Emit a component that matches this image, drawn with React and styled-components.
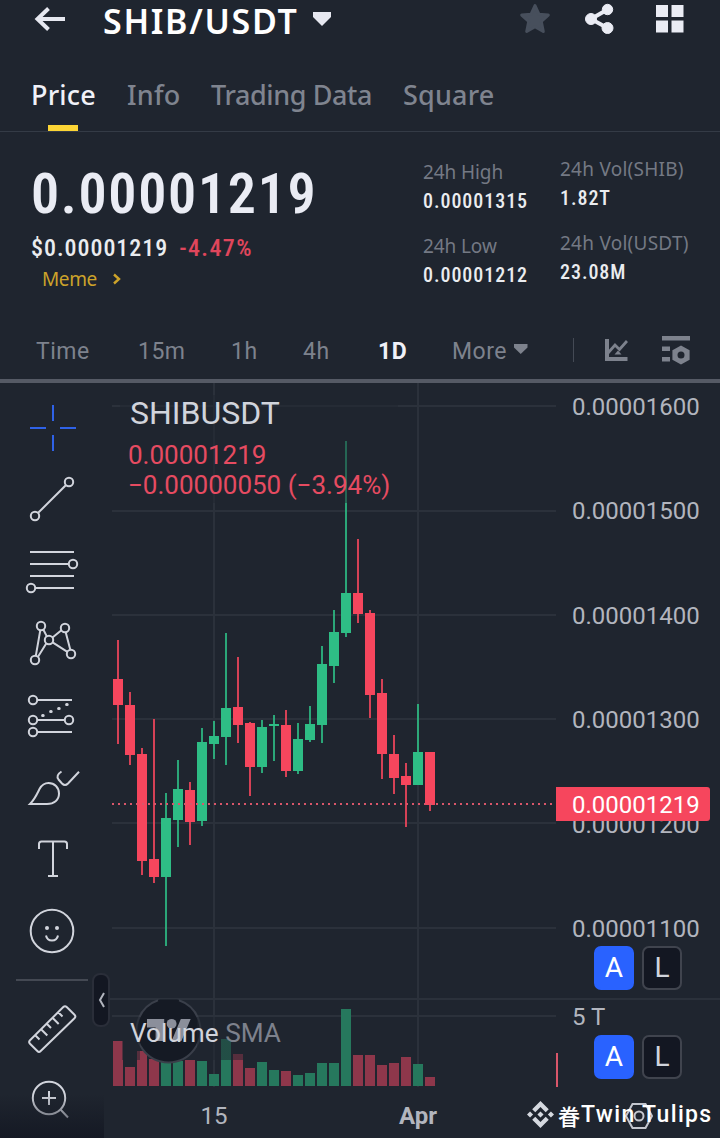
import React from 'react';
import styled, { createGlobalStyle } from 'styled-components';
import { SiBinance } from 'react-icons/si';

const GREEN = '#2ebd85';
const RED = '#f6465d';

const tabs = ['Price', 'Info', 'Trading Data', 'Square'];
const intervals = ['Time', '15m', '1h', '4h', '1D'];
const prices = ['0.00001600', '0.00001500', '0.00001400', '0.00001300', '0.00001200', '0.00001100'];

// up, high, body top, body bottom, low, volume top
const candles = [
    [0, 640, 679, 705, 744, 1041],
    [0, 692, 705, 755, 765, 1067],
    [0, 748, 754, 861, 875, 1051],
    [0, 719, 859, 877, 883, 1059],
    [1, 793, 818, 877, 946, 1062],
    [1, 760, 789, 820, 847, 1061],
    [0, 782, 790, 822, 845, 1060],
    [1, 728, 742, 821, 826, 1061],
    [1, 721, 736, 744, 759, 1074],
    [1, 633, 708, 737, 765, 1039],
    [0, 657, 707, 725, 743, 1054],
    [0, 722, 723, 767, 796, 1068],
    [1, 720, 727, 767, 773, 1062],
    [1, 715, 724, 726, 761, 1070],
    [0, 710, 725, 771, 777, 1071],
    [1, 723, 739, 771, 774, 1075],
    [1, 706, 724, 740, 742, 1073],
    [1, 646, 664, 725, 743, 1063],
    [1, 610, 632, 666, 683, 1063],
    [1, 441, 593, 633, 637, 1009],
    [0, 539, 593, 614, 623, 1055],
    [0, 610, 613, 695, 718, 1055],
    [0, 679, 693, 754, 779, 1065],
    [0, 735, 754, 778, 794, 1063],
    [0, 763, 776, 785, 827, 1057],
    [1, 704, 752, 785, 785, 1064],
    [0, 752, 752, 805, 811, 1077],
];

const tools = [
    <path key="cross" stroke="#2f62e8" d="M53 13v16M53 43v16M30 36h16M60 36h16" />,
    <g key="line">
        <path d="M38.2 48.8 65.8 21.2" />
        <circle cx="69" cy="18" r="4.2" />
        <circle cx="35" cy="52" r="4.2" />
    </g>,
    <g key="fib">
        <path d="M30 16h44M30 28h39M30 40h44M35 52h39" />
        <circle cx="73" cy="28" r="4.2" />
        <circle cx="31" cy="52" r="4.2" />
    </g>,
    <g key="pattern">
        <path d="M35.8 47.8 40.3 22.2M43.3 21.5 46.8 28.4M38 48.8 46.4 35.3M52.5 29.6 61.4 22.3M52.6 34.3 67.4 43.9M65.7 24.2 70.3 41.8" />
        <circle cx="41" cy="18" r="4.2" />
        <circle cx="65" cy="20" r="4.2" />
        <circle cx="49" cy="32" r="4.2" />
        <circle cx="71" cy="46" r="4.2" />
        <circle cx="35" cy="52" r="4.2" />
    </g>,
    <g key="forecast">
        <path d="M37 20h35M37 40h28M37 52h35" />
        <circle cx="33" cy="20" r="4.2" />
        <circle cx="33" cy="40" r="4.2" />
        <circle cx="69" cy="40" r="4.2" />
        <circle cx="33" cy="52" r="4.2" />
        <path strokeWidth="3" strokeLinecap="round" d="M42.6 35.6h.6M50.6 31.6h.6M58.6 28.4h.6M66.6 24.6h.6" />
    </g>,
    <g key="brush">
        <path d="M30 52C35 47 37.5 41 39.5 37 42 32.500 45 31 48.500 31 54.500 31 59 35.500 59 41.500 59 48 54 52 47 52Z" />
        <path d="M61.500 19.500C57.500 22 56.500 25 58.500 27.500L62 31.500Q65 34.500 68 31.500L79 19.800" />
    </g>,
    <path key="text" d="M39 25v-5q0-2.500 2.500-2.500h23q2.500 0 2.500 2.500v5M53 18v34M48 52h10" />,
    <g key="emoji">
        <circle cx="52" cy="35" r="21.300" />
        <circle cx="47" cy="32" r="2" fill="#d1d4dc" stroke="none" />
        <circle cx="57" cy="32" r="2" fill="#d1d4dc" stroke="none" />
        <path d="M46 39.500q1 5 6 5t6-5" />
    </g>,
];

const bottomTools = [
    <path
        key="ruler"
        strokeLinejoin="round"
        d="M63.300 15 30 48.300Q28.300 50 30 51.700L37.300 59Q39 60.700 40.700 59L74.500 26.200Q76.200 24.500 74.500 22.700L66.700 15Q65 13.300 63.300 15ZM35.500 43.500l4 4M41.300 37.500l6 6M47 32l4 4M52.700 26l6 6M58.500 20.500l4 4"
    />,
    <g key="zoom">
        <circle cx="49" cy="34" r="16.200" />
        <path d="M42 34h14M49 27v14M60.500 45.500l7.500 8" />
    </g>,
];

function ToolIcon({ children }) {
    return (
        <svg width="104" height="72" fill="none" stroke="#d1d4dc" strokeWidth="2">
            {children}
        </svg>
    );
}

function TopBar() {
    return (
        <TopBarRow>
            <svg width="32" height="24" fill="none" stroke="#e6e8f0" strokeWidth="4">
                <path d="M14.500 1.500 3.500 12l11 10.500M4 12h27" />
            </svg>
            <Title>SHIB/USDT</Title>
            <svg width="18" height="14" fill="#e6e8f0">
                <path d="M0 0h18v5l-9 9-9-9z" />
            </svg>
            <TopActions>
                <svg width="32" height="32" viewBox="-16 -16 32 32" fill="#474f5c" stroke="#474f5c" strokeWidth="3" strokeLinejoin="round">
                    <path d="M0-13.500 3.900-4.800 13.300-3.900 6.300 2.500 8.300 12.500 0 7.600-8.300 12.500-6.300 2.500-13.300-3.900-3.900-4.800Z" />
                </svg>
                <svg width="30" height="32" fill="#eaecf4" stroke="#eaecf4">
                    <path d="M23.500 6.500 7 16l16.500 9" fill="none" strokeWidth="4" />
                    <circle cx="7" cy="16" r="5.500" />
                    <circle cx="23.500" cy="6.500" r="5.200" />
                    <circle cx="23.500" cy="25" r="5.500" />
                </svg>
                <svg width="28" height="28" fill="#eaecf4">
                    <path d="M0 0h12v12H0zM15.500 0h12v12h-12zM0 15.500h12v12H0zM15.500 15.500h12v12h-12z" />
                </svg>
            </TopActions>
        </TopBarRow>
    );
}

function Summary() {
    return (
        <SummaryRow>
            <PriceBlock>
                <BigPrice>0.00001219</BigPrice>
                <SubPrice>
                    $0.00001219 <Change>-4.47%</Change>
                </SubPrice>
                <Tag>
                    Meme
                    <svg width="8" height="12" fill="none" stroke="#cda32a" strokeWidth="2.400">
                        <path d="m1 1.500 5 4.500-5 4.500" />
                    </svg>
                </Tag>
            </PriceBlock>
            <Stats>
                <StatLabel>24h High</StatLabel>
                <StatValue>0.00001315</StatValue>
                <StatLabel>24h Low</StatLabel>
                <StatValue>0.00001212</StatValue>
            </Stats>
            <Stats $raised>
                <StatLabel $wide>24h Vol(SHIB)</StatLabel>
                <StatValue>1.82T</StatValue>
                <StatLabel $wide>24h Vol(USDT)</StatLabel>
                <StatValue>23.08M</StatValue>
            </Stats>
        </SummaryRow>
    );
}

function Intervals() {
    return (
        <IntervalRow>
            {intervals.map((name) => (
                <Interval key={name} $active={name === '1D'}>{name}</Interval>
            ))}
            <More>
                More
                <svg width="14" height="10" fill="#7d828d">
                    <path d="M0 0h13.500v3.500L6.700 10 0 3.500z" />
                </svg>
            </More>
            <Divider />
            <svg width="23" height="23" fill="none" stroke="#7d828d">
                <path strokeWidth="4" d="M2 0v20h20.500" />
                <path strokeWidth="2.800" d="m3 14 7-8 4.500 4.500L22 2" />
                <path fill="#7d828d" stroke="none" d="M9.500 15.500 13 11.500l3.500 4z" />
            </svg>
            <svg width="29" height="29" fill="#7d828d">
                <path d="M0 0h28v4.500H0zM0 10.500h8v4.500H0zM0 21h8v4.500H0z" />
                <path fillRule="evenodd" d="m19 9.500 8.600 4.700v9.600L19 28.500l-8.600-4.700v-9.600zM19 15.500a3.500 3.500 0 1 0 0 7 3.500 3.500 0 0 0 0-7z" />
            </svg>
        </IntervalRow>
    );
}

function Plot() {
    return (
        <svg width="452" height="704" viewBox="104 383 452 704" shapeRendering="crispEdges">
            <g fill="#2b313b">
                {[214, 418].map((x) => <rect key={x} x={x - 1} y="383" width="2" height="704" />)}
                {[405, 510, 614, 718, 822, 927, 1015].map((y) => (
                    <rect key={y} x="112" y={y} width="444" height="2" />
                ))}
                <rect x="104" y="998" width="452" height="2" />
            </g>
            {candles.map(([up, , , , , top], i) => (
                <rect key={i} x={113 + 12 * i} y={top} width="10" height={1086 - top} fill={up ? '#26785d' : '#8e374b'} />
            ))}
            <g shapeRendering="auto">
                <path d="M160 999.500a32 32 0 1 0 17 0z" fill="#151a24" />
                <path d="M158 1000.200a32 32 0 1 0 21 0" fill="none" stroke="#3a3f4a" strokeWidth="2" />
                <g transform="translate(147 1014) scale(1.230)" fill="#8b8f9b">
                    <path d="M14 22H7V11H0V4h14zM28 22h-8l7.500-18h8z" />
                    <circle cx="20" cy="8" r="4" />
                </g>
            </g>
            {candles.map(([up, high, top, bottom, low], i) => (
                <g key={i} fill={up ? GREEN : RED}>
                    <rect x={117 + 12 * i} y={high} width="2" height={low - high} opacity="0.85" />
                    <rect x={113 + 12 * i} y={top} width="10" height={bottom - top} />
                </g>
            ))}
            <path d="M112 804H556" stroke="#d9566a" strokeWidth="2" strokeDasharray="2 4" />
        </svg>
    );
}

function Scale() {
    return (
        <ScaleColumn>
            <PriceScale>
                <Prices>
                    {prices.map((p) => <span key={p}>{p}</span>)}
                </Prices>
                <Toggles />
                <LastPrice>0.00001219</LastPrice>
            </PriceScale>
            <VolumeScale>
                <span>5 T</span>
                <Toggles />
                <VolumeMark />
            </VolumeScale>
        </ScaleColumn>
    );
}

function Toggles() {
    return (
        <ToggleRow>
            <Toggle $on>A</Toggle>
            <Toggle>L</Toggle>
        </ToggleRow>
    );
}

export default function App() {
    return (
        <Screen>
            <GlobalStyle />
            <TopBar />
            <TabRow>
                {tabs.map((name, i) => (
                    <Tab key={name} $active={i === 0} $tight={name === 'Trading Data'}>{name}</Tab>
                ))}
            </TabRow>
            <Summary />
            <Intervals />
            <Chart>
                <Toolbar>
                    {tools.map((icon) => <ToolIcon key={icon.key}>{icon}</ToolIcon>)}
                    <ToolDivider />
                    {bottomTools.map((icon) => <ToolIcon key={icon.key}>{icon}</ToolIcon>)}
                    <ToolFade />
                </Toolbar>
                <PlotColumn>
                    <Plot />
                    <PriceLegend>
                        <h2>SHIBUSDT</h2>
                        <p>0.00001219</p>
                        <p>−0.00000050 (−3.94%)</p>
                    </PriceLegend>
                    <VolumeLegend>
                        Volume <span>SMA</span>
                    </VolumeLegend>
                    <TimeAxis>
                        <span>15</span>
                        <b>Apr</b>
                    </TimeAxis>
                </PlotColumn>
                <Scale />
                <Collapse>
                    <svg width="7" height="16" fill="none" stroke="#b2b5be" strokeWidth="2">
                        <path d="M6 1 2 8l4 7" />
                    </svg>
                </Collapse>
                <SettingsIcon width="28" height="28" fill="none" stroke="#c3c6ce" strokeWidth="2">
                    <path d="M7.500 2h13L27 14l-6.500 12h-13L1 14z" />
                    <circle cx="14" cy="14" r="4.500" />
                </SettingsIcon>
                <Watermark>
                    <SiBinance size={27} color="#d5d9e0" />
                    <i>眷</i>
                    <span>Twin Tulips</span>
                </Watermark>
            </Chart>
        </Screen>
    );
}

const GlobalStyle = createGlobalStyle`
    * {
        box-sizing: border-box;
        margin: 0;
        padding: 0;
    }

    body {
        background-color: #1f252f;
    }

    svg {
        display: block;
        flex-shrink: 0;
    }
`

const Screen = styled.div`
    width: 720px;
    height: 1138px;
    overflow: hidden;
    background-color: #1f252f;
    font-family: Roboto, 'Liberation Sans', sans-serif;
    color: #eaecef;
    white-space: nowrap;
`

const TopBarRow = styled.header`
    display: flex;
    align-items: center;
    height: 38px;
    padding: 0 36px 0 34px;
    font-family: 'Noto Sans', sans-serif;
`

const Title = styled.h1`
    width: 210px;
    margin-left: 37px;
    padding-top: 3px;
    font-size: 34px;
    font-weight: 600;
    line-height: 38px;
    letter-spacing: 1.7px;
    color: #fff;
`

const TopActions = styled.div`
    display: flex;
    align-items: center;
    margin-left: auto;

    svg:nth-child(2) {
        margin: 0 42px 0 33px;
    }
`

const TabRow = styled.nav`
    display: grid;
    grid-template-columns: 96px 84px 192px auto;
    height: 94px;
    padding: 38px 0 0 31px;
    border-bottom: 1px solid #343b46;
    font-family: 'Noto Sans', sans-serif;
`

const Tab = styled.a`
    position: relative;
    font-size: 27px;
    font-weight: 500;
    line-height: 38px;
    letter-spacing: ${({ $tight }) => ($tight ? '-0.4px' : '0.2px')};
    color: ${({ $active }) => ($active ? '#f0f1f8' : '#7f848f')};

    &::after {
        content: '';
        display: ${({ $active }) => ($active ? 'block' : 'none')};
        position: absolute;
        left: 17px;
        bottom: 0;
        width: 30px;
        height: 6px;
        background-color: #fcd535;
    }
`

const SummaryRow = styled.section`
    display: grid;
    grid-template-columns: 392px 137px auto;
    height: 189px;
    padding-left: 31px;
`

const PriceBlock = styled.div`
    padding-top: 29px;
`

const BigPrice = styled.div`
    font-size: 56px;
    font-weight: 600;
    font-stretch: 85%;
    line-height: 66px;
    letter-spacing: 1.7px;
    color: #eaecf4;
`

const SubPrice = styled.div`
    display: flex;
    gap: 11px;
    margin-top: 7px;
    font-size: 24px;
    font-weight: 500;
    font-stretch: 85%;
    line-height: 28px;
    letter-spacing: 0.95px;
`

const Change = styled.span`
    letter-spacing: 1.4px;
    color: #e0465c;
`

const Tag = styled.div`
    display: flex;
    align-items: center;
    gap: 16px;
    padding: 3px 0 0 11px;
    font-family: 'Noto Sans', sans-serif;
    font-size: 19px;
    line-height: 28px;
    letter-spacing: -0.4px;
    color: #cda32a;
`

const Stats = styled.div`
    padding-top: ${({ $raised }) => ($raised ? '23px' : '26px')};
`

const StatLabel = styled.div`
    font-family: 'Noto Sans', sans-serif;
    font-size: 19px;
    line-height: 28px;
    letter-spacing: ${({ $wide }) => ($wide ? '0.25px' : '-0.1px')};
    color: #747984;
`

const StatValue = styled.div`
    margin-bottom: 16px;
    font-size: 20px;
    font-weight: 500;
    font-stretch: 85%;
    line-height: 30px;
    letter-spacing: 0.95px;
    color: #eaecef;
`

const IntervalRow = styled.nav`
    display: grid;
    grid-template-columns: 102px 93px 72px 75px 74px 121px 32px 57px auto;
    align-items: center;
    height: 62px;
    padding: 0 0 0 36px;
    border-bottom: 4px solid #555a65;
    font-size: 23px;
    letter-spacing: 0.5px;
    color: #7d828d;
`

const Interval = styled.a`
    padding-top: 2px;
    font-weight: ${({ $active }) => ($active ? 700 : 400)};
    color: ${({ $active }) => ($active ? '#f0f1f8' : 'inherit')};
`

const More = styled.a`
    display: flex;
    align-items: center;
    gap: 7px;
    padding-top: 2px;

    svg {
        margin-bottom: 4px;
    }
`

const Divider = styled.span`
    width: 1px;
    height: 24px;
    background-color: #444a55;
`

const Chart = styled.main`
    display: flex;
    position: relative;
    height: 755px;
`

const Toolbar = styled.aside`
    display: flex;
    flex-direction: column;
    position: relative;
    width: 104px;
    padding-top: 9px;
`

const ToolDivider = styled.div`
    width: 72px;
    height: 2px;
    margin: 11px 0 11px 16px;
    background-color: #444953;
`

const ToolFade = styled.div`
    position: absolute;
    left: 0;
    bottom: 0;
    width: 104px;
    height: 44px;
    background: linear-gradient(rgba(19, 23, 34, 0), rgba(19, 23, 34, 0.85));
`

const PlotColumn = styled.div`
    position: relative;
    width: 452px;
`

const PriceLegend = styled.div`
    position: absolute;
    left: 16px;
    top: 12px;
    padding: 0 8px;
    background-color: rgba(31, 37, 47, 0.5);
    height: 108px;

    h2 {
        margin-left: 2px;
        font-size: 32px;
        font-weight: 400;
        line-height: 36px;
        color: #d1d4dc;
    }

    p {
        font-size: 26px;
        line-height: 30px;
        color: #e64b61;
    }

    h2 + p {
        margin-top: 9px;
    }
`

const VolumeLegend = styled.div`
    position: absolute;
    left: 18px;
    top: 634px;
    width: 166px;
    height: 43px;
    padding-left: 8px;
    background: linear-gradient(90deg, rgba(31, 37, 47, 0.5) 18px, transparent 18px, transparent 75px, rgba(31, 37, 47, 0.5) 75px);
    font-size: 26.2px;
    line-height: 33px;
    color: #d1d4dc;

    span {
        color: #7d818c;
    }
`

const TimeAxis = styled.div`
    display: grid;
    grid-template-columns: 204px 204px;
    padding-left: 8px;
    font-size: 24px;
    line-height: 58px;
    text-align: center;
    color: #b2b5be;
`

const ScaleColumn = styled.div`
    width: 164px;
    font-size: 24px;
    color: #b2b5be;
`

const PriceScale = styled.div`
    position: relative;
    height: 617px;
    padding-top: 11px;
    border-bottom: 2px solid #2b313b;
`

const Prices = styled.div`
    display: flex;
    flex-direction: column;
    justify-content: space-between;
    height: 548px;
    margin-bottom: 4px;
    padding-left: 16px;
    line-height: 26px;
`

const LastPrice = styled.div`
    position: absolute;
    left: 0;
    top: 404px;
    width: 154px;
    height: 34px;
    padding-left: 16px;
    border-radius: 0 3px 3px 0;
    background-color: ${RED};
    line-height: 36px;
    color: #fff;
`

const VolumeScale = styled.div`
    position: relative;
    padding-top: 4px;

    > span {
        display: block;
        height: 31px;
        padding-left: 16px;
        line-height: 27px;
    }
`

const VolumeMark = styled.div`
    position: absolute;
    left: 0;
    top: 53px;
    width: 2px;
    height: 34px;
    background-color: #d9566a;
`

const ToggleRow = styled.div`
    display: flex;
    gap: 8px;
    padding-left: 38px;
`

const Toggle = styled.button`
    width: 40px;
    height: 44px;
    padding-bottom: 1px;
    border: 2px solid ${({ $on }) => ($on ? '#2962ff' : '#40444e')};
    border-radius: 7px;
    background-color: ${({ $on }) => ($on ? '#2962ff' : '#131722')};
    font-family: inherit;
    font-size: 28px;
    color: ${({ $on }) => ($on ? '#fff' : '#d1d4dc')};
`

const Collapse = styled.div`
    display: flex;
    align-items: center;
    justify-content: center;
    position: absolute;
    left: 92px;
    top: 590px;
    width: 18px;
    height: 54px;
    border: 2px solid #2a2e39;
    border-radius: 8px;
    background-color: #131722;
`

const SettingsIcon = styled.svg`
    position: absolute;
    left: 625px;
    top: 719px;
`

const Watermark = styled.div`
    display: flex;
    align-items: center;
    position: absolute;
    left: 527px;
    top: 716px;
    height: 30px;
    color: #fff;

    i {
        margin: 2px 1px 0 4px;
        font-family: 'Noto Sans CJK SC', sans-serif;
        font-size: 22px;
        font-weight: 500;
        font-style: normal;
        line-height: 30px;
    }

    span {
        font-size: 23px;
        font-weight: 500;
        letter-spacing: 1.35px;
    }
`
